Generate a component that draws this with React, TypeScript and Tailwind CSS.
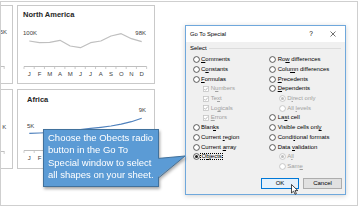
import { clsx } from "clsx";

// Excel "Go To Special" screenshot: sparkline chart panels behind a dialog and a callout.
const MONTHS = ["J", "F", "M", "A", "M", "J", "J", "A", "S", "O", "N", "D"];
const STEP = 10.22;

type Opt = {
  t: string;
  k: number;
  kind?: "radio" | "check";
  on?: boolean;
  dis?: boolean;
  sub?: boolean;
  focus?: boolean;
};

const LEFT: Opt[] = [
  { t: "Comments", k: 0 },
  { t: "Constants", k: 1 },
  { t: "Formulas", k: 0 },
  { t: "Numbers", k: 1, kind: "check", on: true, dis: true, sub: true },
  { t: "Text", k: 2, kind: "check", on: true, dis: true, sub: true },
  { t: "Logicals", k: 2, kind: "check", on: true, dis: true, sub: true },
  { t: "Errors", k: 0, kind: "check", on: true, dis: true, sub: true },
  { t: "Blanks", k: 4 },
  { t: "Current region", k: 8 },
  { t: "Current array", k: 8 },
  { t: "Objects", k: 1, on: true, focus: true },
];

const RIGHT: Opt[] = [
  { t: "Row differences", k: 2 },
  { t: "Column differences", k: 4 },
  { t: "Precedents", k: 0 },
  { t: "Dependents", k: 0 },
  { t: "Direct only", k: 1, on: true, dis: true, sub: true },
  { t: "All levels", k: 4, dis: true, sub: true },
  { t: "Last cell", k: 2 },
  { t: "Visible cells only", k: 17 },
  { t: "Conditional formats", k: 5 },
  { t: "Data validation", k: 5 },
  { t: "All", k: 1, on: true, dis: true, sub: true },
  { t: "Same", k: 3, dis: true, sub: true },
];

// months: how many labels are left uncovered (the callout hides the rest on Africa)
function Axis({ y, months = 12 }: { y: number; months?: number }) {
  return (
    <g>
      <line x1="24" x2="146.7" y1={y} y2={y} stroke="#bfbfbf" strokeWidth="1" />
      {Array.from({ length: 13 }, (_, i) => (
        <line key={i} x1={24 + i * STEP} x2={24 + i * STEP} y1={y} y2={y + 2.5} stroke="#bfbfbf" strokeWidth="0.8" />
      ))}
      {MONTHS.slice(0, months).map((m, i) => (
        <text key={i} x={29.3 + i * STEP} y={y + 9} fontSize="6" fill="#404040" textAnchor="middle">
          {m}
        </text>
      ))}
    </g>
  );
}

function Radio({ on, dis }: { on?: boolean; dis?: boolean }) {
  return (
    <svg width="7" height="7" viewBox="0 0 7 7" className="shrink-0">
      <circle cx="3.5" cy="3.5" r="2.9" fill="#fff" stroke={dis ? "#bdbdbd" : "#333333"} strokeWidth="0.8" />
      {on && <circle cx="3.5" cy="3.5" r="1.5" fill={dis ? "#bdbdbd" : "#1a1a1a"} />}
    </svg>
  );
}

function Check() {
  return (
    <svg width="6" height="6" viewBox="0 0 6 6" className="shrink-0">
      <rect x="0.5" y="0.5" width="5" height="5" fill="#fff" stroke="#c4c4c4" strokeWidth="0.8" />
      <path d="M1.3 3.1 L2.5 4.3 L4.8 1.6" fill="none" stroke="#a8a8a8" strokeWidth="0.8" />
    </svg>
  );
}

function Row({ o }: { o: Opt }) {
  const label = (
    <>
      {o.t.slice(0, o.k)}
      <span className="underline">{o.t[o.k]}</span>
      {o.t.slice(o.k + 1)}
    </>
  );
  return (
    <div
      className={clsx(
        "flex h-[9.7px] items-center",
        o.sub && (o.kind === "check" ? "pl-[10.2px]" : "pl-[9.5px]")
      )}
    >
      {o.kind === "check" ? <Check /> : <Radio on={o.on} dis={o.dis} />}
      {o.focus ? (
        <span className="ml-[0.5px] flex h-[7px] items-center whitespace-nowrap border border-dotted border-black px-[0.5px] text-black">
          {label}
        </span>
      ) : (
        <span
          className={clsx(
            "whitespace-nowrap",
            o.kind === "check" ? "ml-[2px]" : "ml-[1.5px]",
            o.dis ? "text-[#a0a0a0]" : "text-black"
          )}
        >
          {label}
        </span>
      )}
    </div>
  );
}

export default function App() {
  return (
    <div className="relative h-[215px] w-[358px] overflow-hidden bg-white pt-[1px] font-['Liberation_Sans',Arial,sans-serif]">
      <div className="h-[205px] w-[358px] border border-[#cfcfcf] pt-[3px]">
        <div className="grid grid-cols-[12px_138px] grid-rows-[79px_80px] gap-x-[4px] gap-y-[5px]">
          {/* cut-off panel, top */}
          <div className="border-y border-r border-[#c9c9c9]">
            <svg width="11" height="77" viewBox="1 6 11 77">
              <text x="7" y="34.2" fontSize="6" fill="#404040" textAnchor="end">
                5K
              </text>
              <line x1="0" x2="4.5" y1="66.5" y2="66.5" stroke="#bfbfbf" />
              <line x1="4.2" x2="4.2" y1="66.5" y2="69" stroke="#bfbfbf" strokeWidth="0.8" />
            </svg>
          </div>

          <div className="flex flex-col border border-[#c9c9c9]">
            <div className="mt-[4px] h-[10px] pl-[5px] text-[7.5px] font-bold leading-[10px] text-[#262626]">
              North America
            </div>
            <svg width="136" height="62" viewBox="18 20 136 62">
              <text x="23" y="35.4" fontSize="6" fill="#404040">
                100K
              </text>
              <text x="146" y="35.4" fontSize="6" fill="#404040" textAnchor="end">
                98K
              </text>
              <polyline
                points="29.3,41 39.5,42.7 49.7,42.3 60,40.3 70.2,46 80.4,47.7 90.6,42.7 100.8,41 111,36 121.2,33.7 131.4,38.7 141.7,41.7"
                fill="none"
                stroke="#bfbfbf"
                strokeWidth="1.2"
                strokeLinejoin="round"
              />
              <Axis y={66.5} />
            </svg>
          </div>

          {/* cut-off panel, bottom */}
          <div className="border-y border-r border-[#c9c9c9]">
            <svg width="11" height="78" viewBox="1 90 11 78">
              <text x="6.3" y="129.2" fontSize="6" fill="#404040" textAnchor="end">
                K
              </text>
              <line x1="0" x2="4.5" y1="151.5" y2="151.5" stroke="#bfbfbf" />
              <line x1="4.2" x2="4.2" y1="151.5" y2="154" stroke="#bfbfbf" strokeWidth="0.8" />
            </svg>
          </div>

          <div className="flex flex-col border border-[#c9c9c9]">
            <div className="mt-[5px] h-[10px] pl-[9px] text-[7.5px] font-bold leading-[10px] text-[#262626]">
              Africa
            </div>
            <svg width="136" height="61" viewBox="18 105 136 61">
              <text x="146" y="112.2" fontSize="6" fill="#404040" textAnchor="end">
                9K
              </text>
              <text x="27" y="127.9" fontSize="6" fill="#404040">
                5K
              </text>
              <polyline
                points="29.3,133.3 39.5,133 49.7,132.5 60,131.6 70.2,130.6 80.4,129.5 90.6,128.4 100.8,127.3 111,126 121.2,124.2 131.4,121.7 141.7,118.3"
                fill="none"
                stroke="#4f81bd"
                strokeWidth="1.2"
                strokeLinejoin="round"
              />
              <Axis y={150.5} months={2} />
            </svg>
          </div>
        </div>
      </div>

      {/* Go To Special dialog */}
      <div className="absolute left-[185px] top-[25px] flex h-[170px] w-[161px] flex-col border border-[#6fa8dc] bg-[#f0f0f0] text-[6px] shadow-[0_1px_5px_rgba(0,0,0,0.18)]">
        <div className="flex h-[16px] shrink-0 items-center bg-white pl-[4px] text-[5.8px] text-black">
          <span className="flex-1">Go To Special</span>
          <span className="flex h-full w-[22px] items-center justify-center text-[6.5px]">?</span>
          <span className="flex h-full w-[22px] items-center justify-center">
            <svg width="6" height="6" viewBox="0 0 6 6">
              <path d="M0.5 0.5 L5.5 5.5 M5.5 0.5 L0.5 5.5" stroke="#333" strokeWidth="0.7" />
            </svg>
          </span>
          <span className="w-[1px]" />
        </div>

        <div className="pt-[2px]">
          <div className="flex h-[8px] items-center gap-[2px] pl-[4px] pr-[4px] text-black">
            <span>Select</span>
            <span className="h-px flex-1 bg-[#dcdcdc]" />
          </div>

          <div className="mt-[3px] grid grid-cols-[76.7px_1fr] pl-[6.5px]">
            <div className="flex flex-col">
              {LEFT.map((o) => (
                <Row key={o.t} o={o} />
              ))}
            </div>
            <div className="flex flex-col">
              {RIGHT.map((o) => (
                <Row key={o.t} o={o} />
              ))}
            </div>
          </div>

          <div className="mt-[6.9px] flex justify-end gap-[4px] pr-[3px] text-black">
            <div className="flex h-[11px] w-[38px] items-center justify-center border border-[#0078d7] bg-[#e5f1fb]">
              OK
            </div>
            <div className="flex h-[11px] w-[39px] items-center justify-center border border-[#adadad] bg-[#e1e1e1]">
              Cancel
            </div>
          </div>
        </div>
      </div>

      {/* mouse pointer over OK */}
      <svg className="absolute left-[290.5px] top-[183.5px]" width="8" height="12" viewBox="0 0 8 12">
        <path
          d="M0.5 0.5 L0.5 9 L2.6 7.1 L4 10.2 L5.4 9.6 L4 6.6 L6.8 6.6 Z"
          fill="#fff"
          stroke="#000"
          strokeWidth="0.7"
          strokeLinejoin="round"
        />
      </svg>

      {/* callout */}
      <div className="absolute left-[43px] top-[129px] h-[58px] w-[116px] drop-shadow-[1.5px_2px_1.5px_rgba(0,0,0,0.35)]">
        <div className="h-full w-full border border-[#41719c] bg-[#5b9bd5] pl-[4px] pt-[2.2px] text-[9.5px] leading-[12.2px] text-white">
          <div className="whitespace-nowrap">Choose the Obects radio</div>
          <div className="whitespace-nowrap">button in the Go To</div>
          <div className="whitespace-nowrap">Special window to select</div>
          <div className="whitespace-nowrap">all shapes on your sheet.</div>
        </div>
        <svg className="absolute left-0 top-0 overflow-visible" width="116" height="58">
          <polygon points="114,29.5 142,27 114,49" fill="#5b9bd5" />
          <polyline points="115.5,29.4 142,27 115.5,48.9" fill="none" stroke="#41719c" strokeWidth="1" />
        </svg>
      </div>
    </div>
  );
}
